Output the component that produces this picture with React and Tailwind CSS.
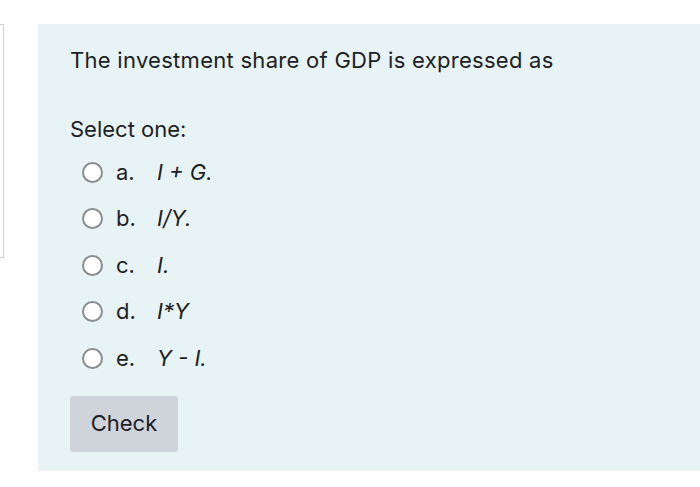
import React from "react";

const options = [
  ["a.", "I + G."],
  ["b.", "I/Y."],
  ["c.", "I."],
  ["d.", "I*Y"],
  ["e.", "Y - I."],
];

export default function App() {
  return (
    <div className="w-[700px] h-[487px] bg-white flex overflow-hidden text-[#1d2125]" style={{ fontFamily: "Inter, 'Liberation Sans', sans-serif" }}>
      <div className="w-[4px] h-[234px] mt-[24px] border-r border-y border-[#d0d0d0] shrink-0" />
      <div className="ml-[34px] mt-[24px] h-[447px] flex-1 bg-[#e7f3f5] pl-[32px] pt-[21px]">
        <p className="text-[22px] leading-[30px] tracking-[0.28px]">The investment share of GDP is expressed as</p>
        <p className="text-[22px] leading-[30px] mt-[39px]">Select one:</p>
        <div className="flex flex-col mt-[5px]">
          {options.map(([l, t]) => (
            <div key={l} className="flex items-center h-[46.5px]">
              <span className="w-[21px] h-[21px] rounded-full border-[2px] border-[#8a8d90] bg-white ml-[12px] shrink-0" />
              <span className="text-[22px] ml-[13px] w-[41px]">{l}</span>
              <span className="text-[22px] italic">{t}</span>
            </div>
          ))}
        </div>
        <button className="mt-[14px] w-[108px] h-[56px] bg-[#ced4da] text-[22px] rounded-[2px]">Check</button>
      </div>
    </div>
  );
}
